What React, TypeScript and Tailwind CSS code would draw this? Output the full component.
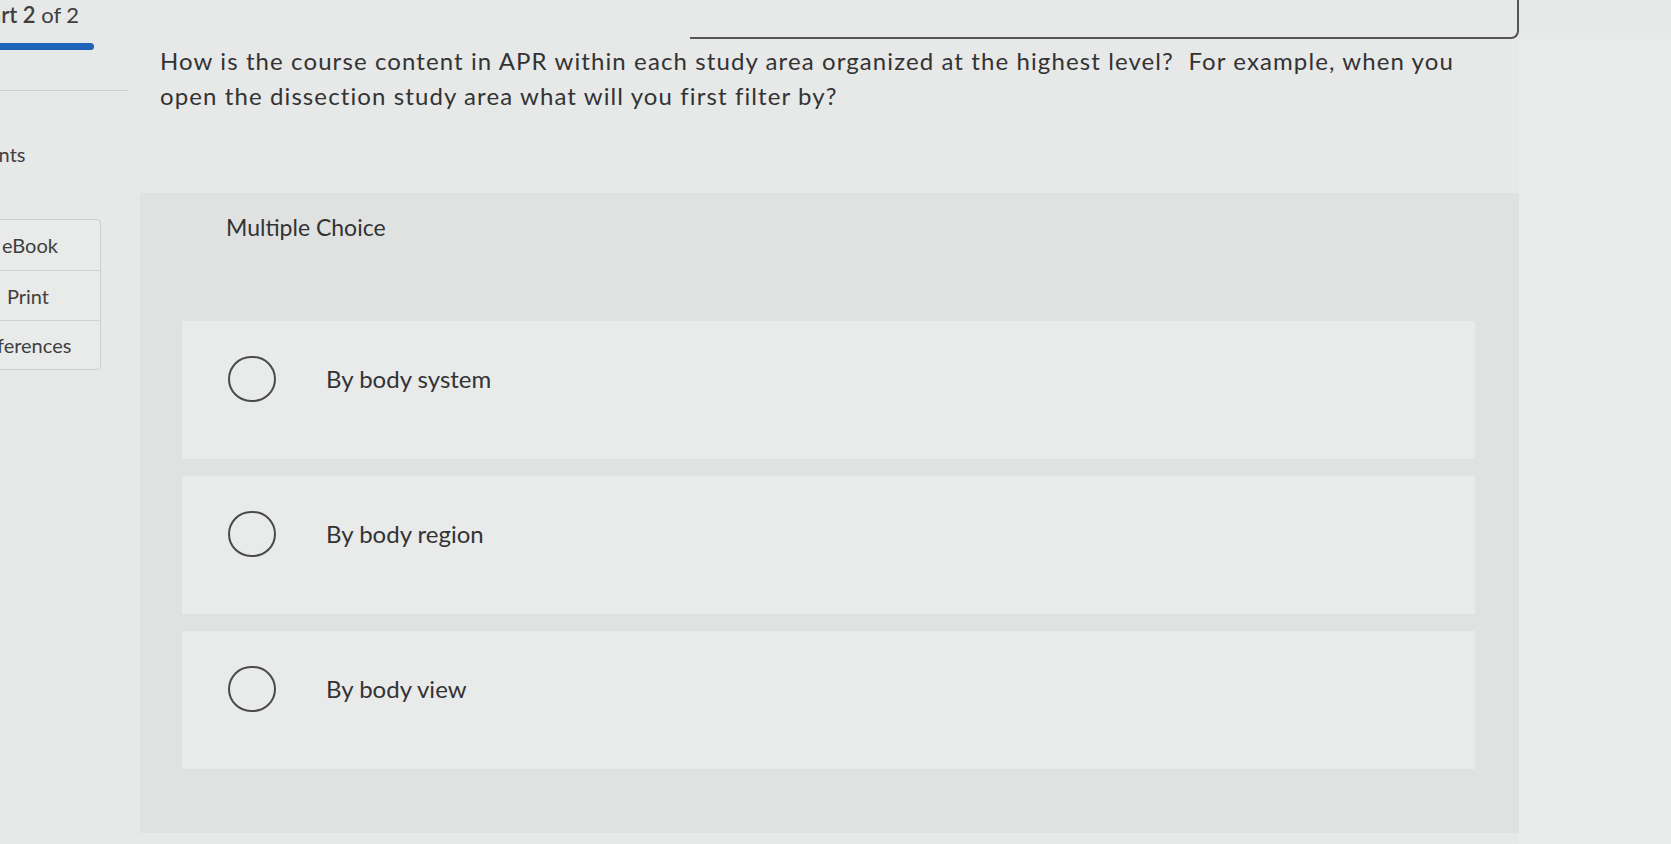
import React from "react";

const options = ["By body system", "By body region", "By body view"];

function Sidebar() {
  return (
    <div className="w-[130px] shrink-0 overflow-hidden text-[#3f3f3f]">
      {/* part indicator */}
      <div className="pt-[2px] text-[22px] leading-[26px] whitespace-nowrap -ml-[23px]">
        <span className="font-semibold">Part 2</span> of 2
      </div>
      <div className="mt-[15px] h-[7px] w-[94px] rounded-r-full bg-[#1f64b8]" />
      <div className="mt-[40px] h-px w-[128px] bg-[#cfd0d0]" />

      <div className="mt-[50px] text-[20px] leading-[26px] whitespace-nowrap -ml-[29px]">Points</div>

      {/* resource links */}
      <div className="mt-[52px] -ml-[41px] w-[142px] rounded-r-[4px] border border-[#cfcfcf] bg-[#e9eaea]">
        <div className="h-[51px] flex items-center justify-center text-[20px] border-b border-[#d2d2d2]">eBook</div>
        <div className="h-[50px] flex items-center justify-center pr-[4px] text-[20px] border-b border-[#d2d2d2]">Print</div>
        <div className="h-[48px] flex items-center justify-center pr-[14px] text-[20px]">References</div>
      </div>
    </div>
  );
}

function Option({ label }: { label: string }) {
  return (
    <div className="h-[138px] flex items-start bg-[#e9eaea] pl-[46px] pt-[35px]">
      <div className="h-[46px] w-[48px] shrink-0 rounded-full border-2 border-[#4a4a4a]" />
      <span className="ml-[50px] mt-[9px] text-[24px] leading-[28px] text-[#333]">{label}</span>
    </div>
  );
}

export default function App() {
  return (
    <div
      className="flex h-[844px] w-full overflow-hidden bg-[#e7e8e8]"
      style={{ fontFamily: "Lato, 'Open Sans', sans-serif" }}
    >
      <Sidebar />

      <div className="flex-1 flex flex-col">
        {/* top box edge */}
        <div className="ml-[560px] mr-[152px] h-[40px] -mt-px rounded-br-[8px] border-b-2 border-r-2 border-[#555]" />

        <div className="flex flex-1">
          <div className="w-[1389px] shrink-0 flex flex-col">
            <p className="ml-[30px] mt-[4px] text-[24px] leading-[35px] tracking-[1.1px] text-[#333] whitespace-nowrap">
              How is the course content in APR within each study area organized at the highest level?&nbsp; For example, when you
              <br />
              open the dissection study area what will you first filter by?
            </p>

            {/* multiple choice panel */}
            <div className="ml-[10px] mt-[80px] h-[640px] bg-[#e0e1e1] flex flex-col">
              <div className="h-[128px] pl-[86px] pt-[20px] text-[23px] leading-[28px] text-[#333]">
                Multiple Choice
              </div>
              <div className="flex flex-col gap-[17px] pl-[42px] pr-[44px]">
                {options.map((o) => (
                  <Option key={o} label={o} />
                ))}
              </div>
            </div>
          </div>
          <div className="flex-1 bg-[#eaebeb]" />
        </div>
      </div>
    </div>
  );
}
